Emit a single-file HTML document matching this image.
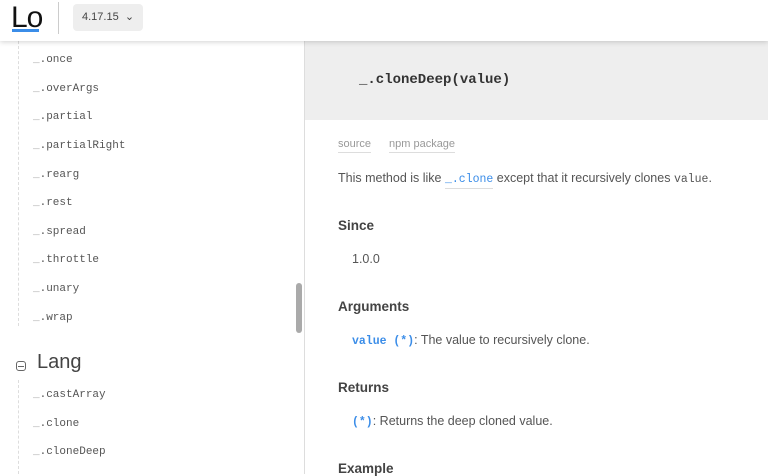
<!DOCTYPE html>
<html><head><style>
body{margin:0;width:768px;height:474px;overflow:hidden;background:#fff;font-family:"Liberation Sans",sans-serif;position:relative}
.hdr{position:absolute;left:0;top:0;width:768px;height:41px;background:#fff;box-shadow:0 1px 5px rgba(0,0,0,.18);z-index:5}
.logo{position:absolute;left:11px;top:1px;font-size:30px;color:#111;letter-spacing:-1px}
.logo:after{content:"";position:absolute;left:1px;right:3px;bottom:3px;height:3px;background:#3b8de8}
.sep{position:absolute;left:58px;top:2px;width:1px;height:32px;background:#ccc}
.ver{position:absolute;left:73px;top:4px;width:70px;height:27px;background:#eee;border-radius:4px;font-size:11px;color:#444;line-height:27px;padding-left:9px;box-sizing:border-box}
.side{position:absolute;left:0;top:41px;width:304px;height:433px;border-right:1px solid #ddd}
.dl{position:absolute;left:18px;border-left:1px dashed #ddd}
.it{position:absolute;left:33px;font-family:"Liberation Mono","DejaVu Sans Mono",monospace;font-size:11px;color:#555}
.it span{color:#aaa}
.thumb{position:absolute;left:296px;top:283px;width:6px;height:50px;background:#aaa;border-radius:3px}
.main{position:absolute;left:305px;top:41px;right:0;bottom:0}
.band{position:absolute;left:0;top:0;right:0;height:79px;background:#eee}
.title{position:absolute;left:54px;top:31px;font-family:"Liberation Mono","DejaVu Sans Mono",monospace;font-size:14px;font-weight:bold;color:#333}
.t{position:absolute;font-size:12.5px;color:#555;white-space:nowrap}
.h{position:absolute;left:33px;font-size:13.5px;font-weight:bold;color:#444}
code{font-family:"Liberation Mono","DejaVu Sans Mono",monospace;font-size:11.5px}
.b{color:#3b8de8;font-weight:bold}
</style></head><body>
<div class="hdr"><div class="logo">Lo</div><div class="sep"></div><div class="ver">4.17.15 &nbsp;⌄</div></div>
<div class="side">
<div class="dl" style="top:0;height:285px"></div>
<div class="dl" style="top:339px;height:94px"></div>
<div class="it" style="top:13px"><span>_</span>.once</div>
<div class="it" style="top:42px"><span>_</span>.overArgs</div>
<div class="it" style="top:70px"><span>_</span>.partial</div>
<div class="it" style="top:99px"><span>_</span>.partialRight</div>
<div class="it" style="top:128px"><span>_</span>.rearg</div>
<div class="it" style="top:156px"><span>_</span>.rest</div>
<div class="it" style="top:185px"><span>_</span>.spread</div>
<div class="it" style="top:213px"><span>_</span>.throttle</div>
<div class="it" style="top:242px"><span>_</span>.unary</div>
<div class="it" style="top:271px"><span>_</span>.wrap</div>
<div style="position:absolute;left:16px;top:320px;width:8px;height:8px;border:1px solid #666;border-radius:3px"><div style="position:absolute;left:1px;right:1px;top:3.5px;height:1px;background:#666"></div></div>
<div style="position:absolute;left:37px;top:310px;font-size:20px;color:#444">Lang</div>
<div class="it" style="top:348px"><span>_</span>.castArray</div>
<div class="it" style="top:377px"><span>_</span>.clone</div>
<div class="it" style="top:405px"><span>_</span>.cloneDeep</div>
</div>
<div class="thumb"></div>
<div class="main">
<div class="band"><div class="title">_.cloneDeep(value)</div></div>
<div class="t" style="left:33px;top:97px;font-size:11px;color:#999;border-bottom:1px solid #ddd;padding-bottom:2px">source</div>
<div class="t" style="left:84px;top:97px;font-size:11px;color:#999;border-bottom:1px solid #ddd;padding-bottom:2px">npm package</div>
<div class="t" style="left:33px;top:130px">This method is like <code style="color:#3b8de8;border-bottom:1px solid #ddd;padding-bottom:2px">_.clone</code> except that it recursively clones <code>value</code>.</div>
<div class="h" style="top:177px">Since</div>
<div class="t" style="left:47px;top:211px">1.0.0</div>
<div class="h" style="top:258px">Arguments</div>
<div class="t" style="left:47px;top:292px"><code class="b">value (*)</code>: The value to recursively clone.</div>
<div class="h" style="top:339px">Returns</div>
<div class="t" style="left:47px;top:373px"><code class="b">(*)</code>: Returns the deep cloned value.</div>
<div class="h" style="top:420px">Example</div>
</div>
</body></html>
